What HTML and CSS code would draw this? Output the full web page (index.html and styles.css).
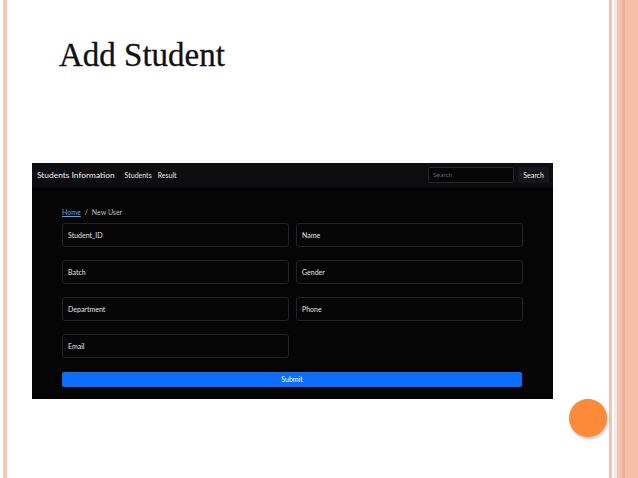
FILE: index.html
```html
<!DOCTYPE html>
<html>
<head>
<meta charset="utf-8">
<link rel="stylesheet" href="styles.css">
</head>
<body>
<div class="slide">
  <div class="gutter-left"></div>
  <div class="stripe-left"></div>
  <main class="content">
    <h1 class="title">Add Student</h1>
    <section class="app">
      <nav class="navbar">
        <span class="brand">Students Information</span>
        <span class="nav-link">Students</span>
        <span class="nav-link">Result</span>
        <span class="spacer"></span>
        <span class="search-input">Search</span>
        <span class="search-btn">Search</span>
      </nav>
      <div class="form-wrap">
        <div class="breadcrumb"><a class="crumb-link">Home</a><span class="sep">/</span><span>New User</span></div>
        <div class="grid">
          <div class="field">Student_ID</div>
          <div class="field">Name</div>
          <div class="field">Batch</div>
          <div class="field">Gender</div>
          <div class="field">Department</div>
          <div class="field">Phone</div>
          <div class="field">Email</div>
          <div></div>
        </div>
        <div class="submit">Submit</div>
      </div>
    </section>
    <div class="fab"></div>
  </main>
  <div class="stripes-right">
    <div class="s1"></div>
    <div class="s2"></div>
    <div class="s3"></div>
    <div class="s4"></div>
    <div class="s5"></div>
    <div class="s6"></div>
  </div>
</div>
</body>
</html>
```

FILE: styles.css
```css
html, body {
  margin: 0;
  padding: 0;
  background: #ffffff;
}
.slide {
  width: 638px;
  height: 478px;
  display: flex;
  overflow: hidden;
}
.gutter-left { width: 3px; flex: none; }
.stripe-left { width: 4px; flex: none; background: #f8c8b6; }
.content {
  flex: 1;
  position: relative;
  display: flex;
  flex-direction: column;
}
.title {
  margin: 39px 0 0 52px;
  font-family: "Liberation Serif", "Times New Roman", serif;
  font-weight: normal;
  font-size: 33px;
  line-height: 32px;
  color: #111111;
  height: 32px;
  -webkit-text-stroke: 0.3px #111111;
}
.app {
  margin: 92px 0 0 25px;
  width: 521px;
  height: 236px;
  background: #050506;
  display: flex;
  flex-direction: column;
  font-family: Lato, "Open Sans", sans-serif;
  color: #e6e6e6;
}
.navbar {
  height: 24px;
  background: #0e0e10;
  display: flex;
  align-items: center;
  padding: 0 4px 0 5px;
}
.brand {
  font-size: 8.4px;
  color: #f0f0f0;
  margin-right: 10px;
}
.nav-link {
  font-size: 7px;
  color: #e8e8e8;
  margin-right: 6px;
}
.spacer { flex: 1; }
.search-input {
  width: 80px;
  height: 14px;
  border: 1px solid #26262a;
  border-radius: 2px;
  background: #050506;
  color: #6a6a6a;
  font-size: 6.5px;
  line-height: 14px;
  padding-left: 4px;
  margin-right: 4px;
}
.search-btn {
  width: 31px;
  height: 16px;
  background: #16161a;
  border-radius: 2px;
  color: #f0f0f0;
  font-size: 7px;
  line-height: 16px;
  text-align: center;
}
.form-wrap {
  padding: 20px 31px 0 30px;
  display: flex;
  flex-direction: column;
}
.breadcrumb {
  font-size: 7px;
  color: #bdbdbd;
  height: 10px;
  line-height: 10px;
  margin-bottom: 6px;
}
.crumb-link {
  color: #5aa0e8;
  text-decoration: underline;
}
.sep { margin: 0 4px; }
.grid {
  display: grid;
  grid-template-columns: 227px 227px;
  column-gap: 7px;
  row-gap: 13px;
  grid-auto-rows: 24px;
}
.field {
  border: 1px solid #232327;
  border-radius: 3px;
  background: #060607;
  font-size: 7px;
  color: #e4e4e4;
  padding-left: 5px;
  display: flex;
  align-items: center;
}
.submit {
  margin-top: 14px;
  height: 15px;
  background: #0d6efd;
  border-radius: 2px;
  color: #ffffff;
  font-size: 7px;
  line-height: 15px;
  text-align: center;
}
.fab {
  position: absolute;
  left: 562px;
  top: 399px;
  width: 38px;
  height: 38px;
  border-radius: 50%;
  background: #fc8a36;
  box-shadow: 1px 2px 3px rgba(0,0,0,0.25);
}
.stripes-right {
  width: 29px;
  flex: none;
  display: flex;
}
.s1 { width: 3px; background: #f6c3b0; }
.s2 { width: 2px; background: #ffffff; }
.s3 { width: 3px; background: #f3ebe8; }
.s4 { width: 5px; background: #f5c0ac; }
.s5 { width: 3px; background: #efae97; }
.s6 { flex: 1; background: #f5bfaa; }
```
